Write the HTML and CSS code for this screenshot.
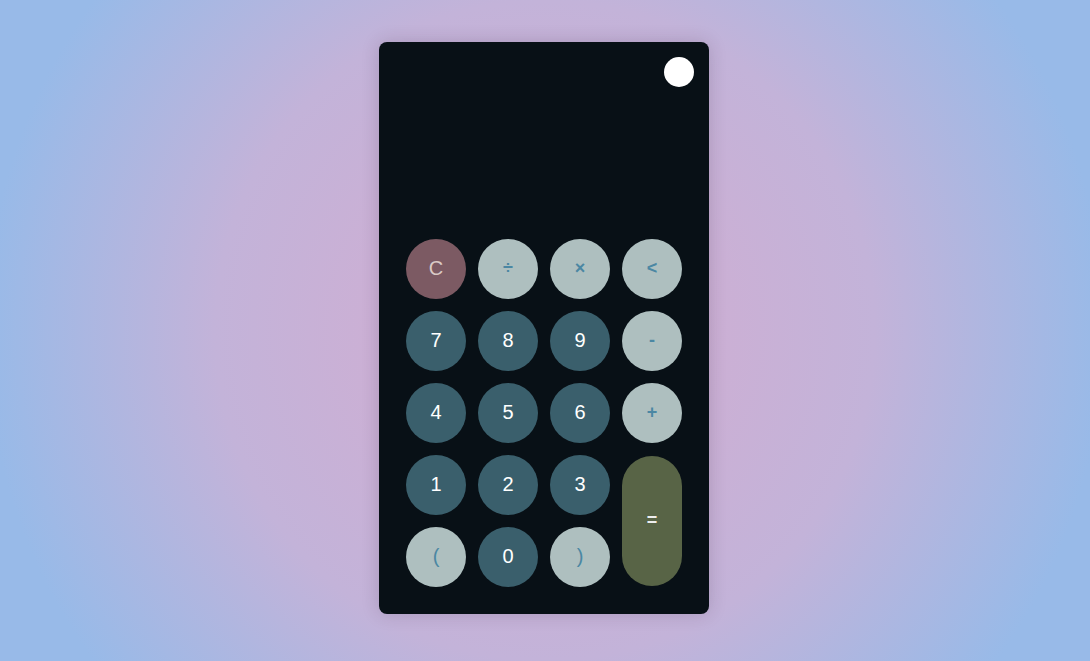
FILE: index.html
```html
<!DOCTYPE html>
<html lang="en">
<head>
<meta charset="utf-8">
<title>Calculator</title>
<link rel="stylesheet" href="styles.css">
</head>
<body>
<div class="calc">
  <div class="display">
    <button class="toggle" aria-label="Toggle theme"></button>
  </div>
  <div class="keypad">
    <button class="key clear">C</button>
    <button class="key op strong">÷</button>
    <button class="key op strong">×</button>
    <button class="key op strong">&lt;</button>
    <button class="key num">7</button>
    <button class="key num">8</button>
    <button class="key num">9</button>
    <button class="key op strong">-</button>
    <button class="key num">4</button>
    <button class="key num">5</button>
    <button class="key num">6</button>
    <button class="key op strong">+</button>
    <button class="key num">1</button>
    <button class="key num">2</button>
    <button class="key num">3</button>
    <button class="key equals">=</button>
    <button class="key op">(</button>
    <button class="key num">0</button>
    <button class="key op">)</button>
  </div>
</div>
</body>
</html>
```
FILE: styles.css
```css
html, body {
  margin: 0;
  height: 100%;
}
body {
  background: radial-gradient(circle at 50% 50%, #d4acd0 0px, #c3b3d9 330px, #98bae8 560px);
  font-family: "Liberation Sans", Arial, sans-serif;
  display: flex;
  justify-content: center;
  align-items: flex-start;
  padding: 42px 2px 0 0;
  box-sizing: border-box;
}
.calc {
  width: 330px;
  height: 572px;
  background: #081016;
  border-radius: 8px;
  box-shadow: 0 0 18px rgba(40, 30, 50, 0.18);
  display: flex;
  flex-direction: column;
}
.display {
  flex: 1;
  position: relative;
}
.toggle {
  position: absolute;
  top: 15px;
  right: 15px;
  width: 30px;
  height: 30px;
  border-radius: 50%;
  background: #ffffff;
  border: none;
  padding: 0;
}
.keypad {
  display: grid;
  grid-template-columns: repeat(4, 60px);
  grid-auto-rows: 60px;
  gap: 12px;
  padding: 0 27px 27px;
}
.key {
  border: none;
  border-radius: 50%;
  width: 60px;
  height: 60px;
  padding: 0 0 2px;
  font-family: "Liberation Sans", Arial, sans-serif;
  font-size: 20px;
  display: flex;
  align-items: center;
  justify-content: center;
}
.num {
  background: #3a5f6c;
  color: #ffffff;
}
.op {
  background: #aebfbf;
  color: #4b87a3;
}
.strong {
  font-size: 18px;
  font-weight: bold;
}
.clear {
  background: #7c5a63;
  color: #dacac6;
}
.equals {
  grid-column: 4;
  grid-row: 4 / span 2;
  height: 130px;
  align-self: center;
  border-radius: 30px;
  background: #586446;
  color: #eeeeee;
  font-weight: bold;
  font-size: 18px;
}
```
